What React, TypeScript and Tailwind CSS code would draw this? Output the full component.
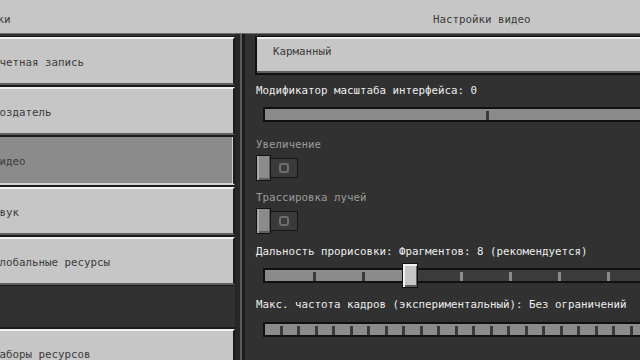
const mono = "font-['DejaVu_Sans_Mono','Liberation_Mono',monospace] text-[10.8px] leading-[16px]"

const navItems = [
  { label: 'Учетная запись' },
  { label: 'Создатель' },
  { label: 'Видео', active: true },
  { label: 'Звук' },
  { label: 'Глобальные ресурсы' },
]

function NavButton({ label, active }: { label: string; active?: boolean }) {
  return (
    <div
      className={`h-[48px] flex items-center pt-[4px] border-r-2 border-r-[#1b1b1b] ${
        active
          ? 'bg-[#8b8b8b] border-b-2 border-b-[#d0d0d0] shadow-[inset_-1px_0_0_#d0d0d0]'
          : 'bg-[#c6c6c6] border-t-2 border-t-[#f0f0f0] border-b-2 border-b-[#5e5e5e]'
      }`}
    >
      <span className={`${mono} -ml-[7px] whitespace-nowrap text-[#3c3c3c]`}>
        {label}
      </span>
    </div>
  )
}

function Toggle() {
  return (
    <div className="flex items-center h-[26px]">
      <div className="h-[26px] w-[15px] bg-[#8b8b8b] border border-[#111] shadow-[inset_2px_0_0_#a9a9a9,inset_-1px_-2px_0_#5e5e5e] z-10" />
      <div className="-ml-[1px] h-[20px] w-[28px] bg-[#3a3a3a] border border-[#151515] flex items-center justify-center">
        <div className="w-[10px] h-[10px] rounded-[3px] border-2 border-[#6e6e6e]" />
      </div>
    </div>
  )
}

function Slider({
  ticks,
  filled,
  thumb,
}: {
  ticks: number[]
  filled?: number
  thumb?: number
}) {
  return (
    <div className="relative h-[25px] ml-[8px] w-[400px]">
      <div className="absolute left-0 right-0 top-[5px] h-[15px] border-2 border-[#101010] bg-[#3c3c3c] overflow-hidden">
        <div
          className="absolute left-0 top-0 bottom-0 bg-[#8b8b8b]"
          style={{ width: filled === undefined ? '100%' : filled }}
        />
        {ticks.map((t) => (
          <div
            key={t}
            className={`absolute top-[2px] h-[9px] w-[3px] ${
              filled !== undefined && t > filled ? 'bg-[#8b8b8b]' : 'bg-[#3a3a3a]'
            }`}
            style={{ left: t - 1 }}
          />
        ))}
      </div>
      {thumb !== undefined && (
        <div
          className="absolute top-0 h-[25px] w-[16px] bg-[#c6c6c6] border border-[#111] shadow-[inset_2px_2px_0_#f2f2f2,inset_-1px_-2px_0_#5e5e5e]"
          style={{ left: thumb }}
        />
      )}
    </div>
  )
}

export default function App() {
  const renderTicks = [49, 98, 147, 196, 245, 294, 343]
  const fpsTicks = Array.from({ length: 21 }, (_, i) => Math.round(17.5 * (i + 1) - 2))

  return (
    <div className="w-[640px] h-[360px] overflow-hidden bg-[#313131] flex flex-col">
      {/* header */}
      <div className="h-[34px] shrink-0 bg-[#c6c6c6] border-b border-b-[#6f6f6f] flex items-center">
        <div className="w-[245px] shrink-0">
          <span className={`${mono} -ml-[48px] text-[#3c3c3c] whitespace-nowrap`}>Настройки</span>
        </div>
        <div className="pl-[188px]">
          <span className={`${mono} text-[#3c3c3c] whitespace-nowrap`}>Настройки видео</span>
        </div>
      </div>

      <div className="flex flex-1 min-h-0">
        {/* left nav */}
        <div className="w-[235px] shrink-0 pt-[2px] flex flex-col">
          <div className="flex flex-col gap-[2px] bg-[#1b1b1b] py-[1px]">
            {navItems.map((n) => (
              <NavButton key={n.label} label={n.label} active={n.active} />
            ))}
          </div>
          <div className="mt-[41px] border-t-2 border-t-[#1b1b1b]">
            <NavButton label="Наборы ресурсов" />
          </div>
        </div>

        {/* divider */}
        <div className="w-[5px] shrink-0 bg-[#262626]" />
        <div className="w-[2px] shrink-0 bg-[#5a5a5a]" />
        <div className="w-[3px] shrink-0 bg-[#1c1c1c]" />

        {/* right panel */}
        <div className="flex-1 min-w-0 pl-[10px] pt-[2px] flex flex-col overflow-hidden">
          <div className="h-[39px] w-[400px] shrink-0 border-t border-b-2 border-x-2 border-[#111] bg-[#c6c6c6] shadow-[inset_0_2px_0_#f0f0f0,inset_0_-2px_0_#5e5e5e] flex items-start pt-[7px]">
            <span className={`${mono} ml-[16px] text-[#3c3c3c]`}>Карманный</span>
          </div>

          <div className={`${mono} mt-[8px] ml-[1px] text-[#ececec] whitespace-nowrap`}>
            Модификатор масштаба интерфейса: 0
          </div>
          <div className="mt-[3px]">
            <Slider ticks={[222]} />
          </div>

          <div className={`${mono} mt-[10px] ml-[1px] text-[#9a9a9a]`}>Увеличение</div>
          <div className="mt-[2px] ml-[1px]">
            <Toggle />
          </div>

          <div className={`${mono} mt-[9px] ml-[1px] text-[#9a9a9a]`}>Трассировка лучей</div>
          <div className="mt-[2px] ml-[1px]">
            <Toggle />
          </div>

          <div className={`${mono} mt-[10px] ml-[1px] text-[#ececec] whitespace-nowrap`}>
            Дальность прорисовки: Фрагментов: 8 (рекомендуется)
          </div>
          <div className="mt-[3px]">
            <Slider ticks={renderTicks} filled={142} thumb={139} />
          </div>

          <div className={`${mono} mt-[9px] ml-[1px] text-[#ececec] whitespace-nowrap`}>
            Макс. частота кадров (экспериментальный): Без ограничений
          </div>
          <div className="mt-[4px]">
            <Slider ticks={fpsTicks} />
          </div>
        </div>
      </div>
    </div>
  )
}
